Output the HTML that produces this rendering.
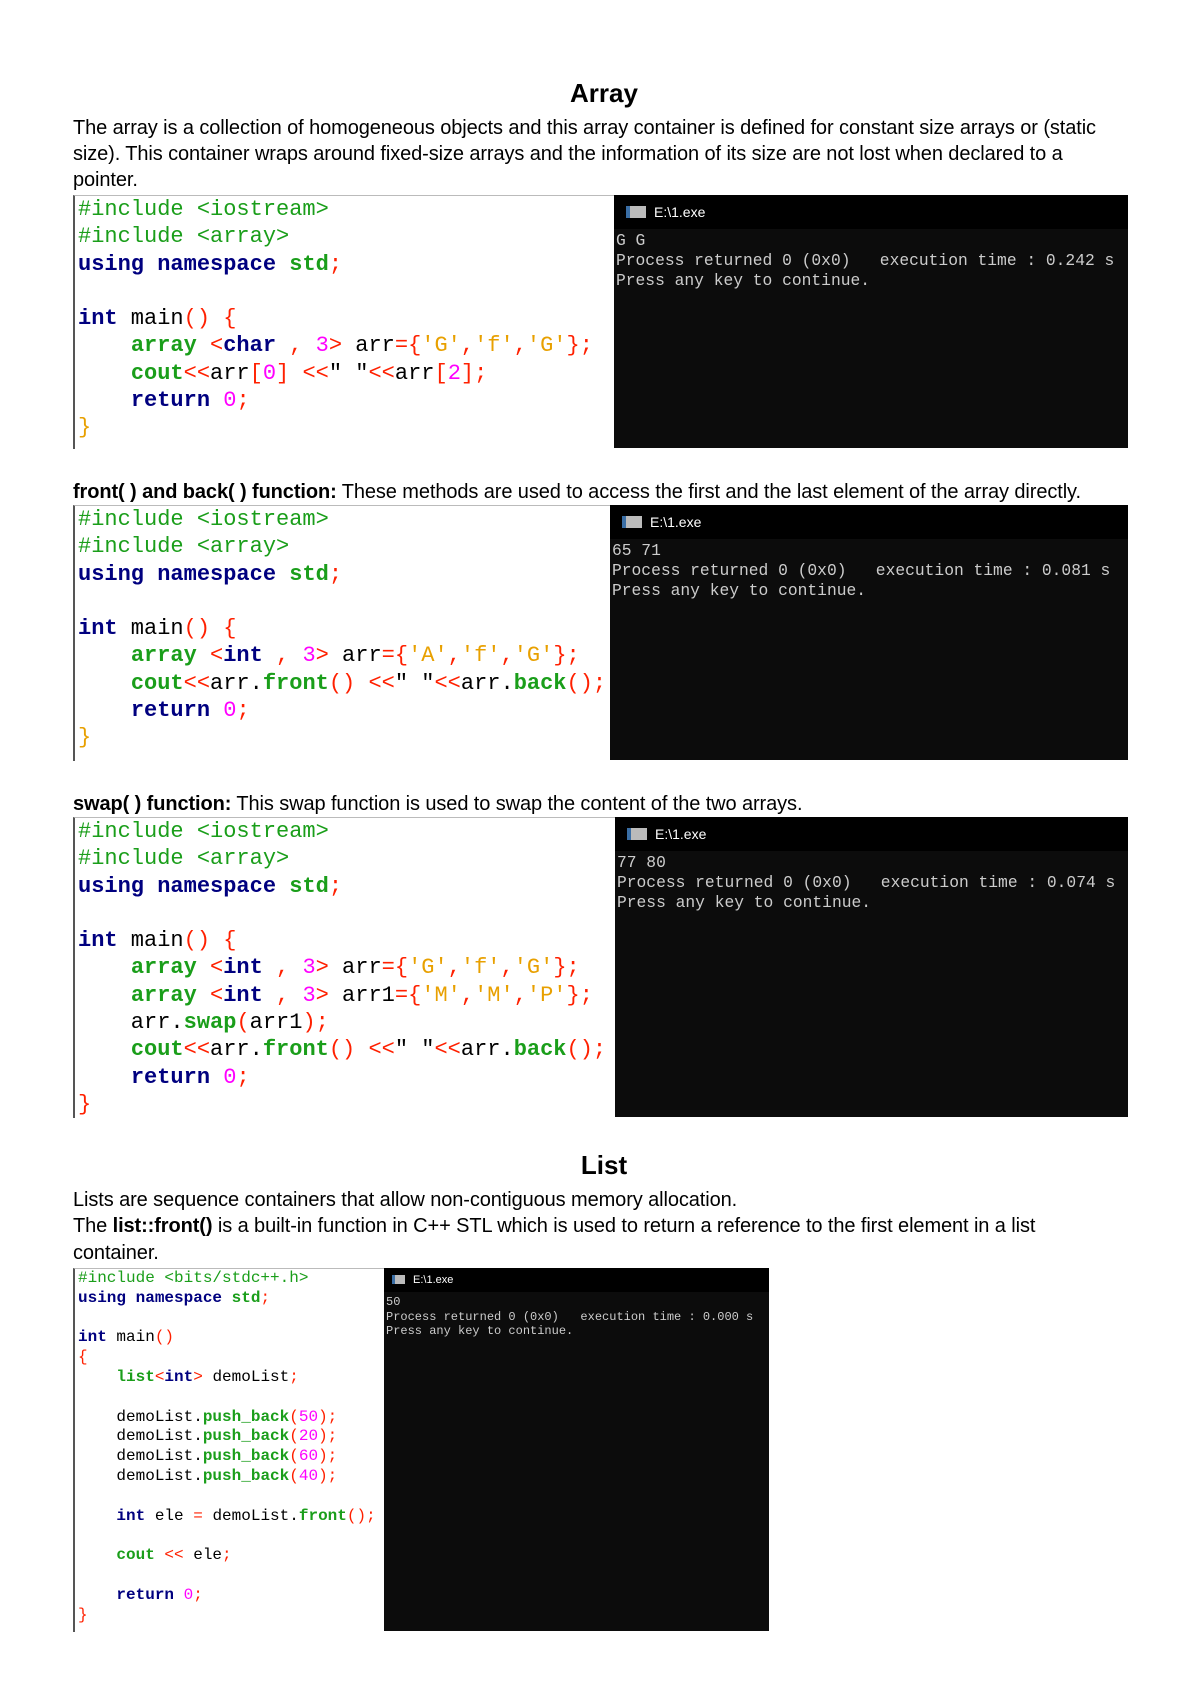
<!DOCTYPE html>
<html><head><meta charset="utf-8"><style>
body{margin:0;width:1200px;height:1698px;background:#fff;position:relative;overflow:hidden;font-family:"Liberation Sans",sans-serif;color:#000}
.t{position:absolute;white-space:nowrap;font-size:20px;line-height:26px;left:73px;letter-spacing:-0.1px}
.h{position:absolute;width:1200px;text-align:center;font-size:26px;font-weight:bold;left:4px}
.code{position:absolute;background:#fff;border-left:2px solid #555;border-top:1px solid #bbb;overflow:hidden;font-family:"Liberation Mono",monospace;white-space:pre}
.code div{height:27.3px;line-height:27.3px;font-size:22px;padding-left:3px}
.code.s div{height:19.8px;line-height:19.8px;font-size:16px}
.term{position:absolute;background:#0c0c0c;overflow:hidden;font-family:"Liberation Mono",monospace;color:#ccc;white-space:pre}
.bar{background:#000;height:34px;color:#fff;font-family:"Liberation Sans",sans-serif;font-size:14px;line-height:34px;padding-left:12px}
.bar i{display:inline-block;width:16px;height:12px;background:#bbb;border-left:4px solid #3a6ea5;margin-right:8px;vertical-align:-1px}
.term .o{font-size:16.3px;line-height:20px;padding-left:2px;padding-top:2px}
.pp{color:#1a9e1a}.kw{color:#00007f;font-weight:bold}.g{color:#1a9e1a;font-weight:bold}.st{color:#e8a000}.n{color:#ff00ff}.r{color:#ff2000}.id{color:#222}
</style></head><body>
<div class="h" style="top:78px">Array</div>
<div class="t" style="top:115px">The array is a collection of homogeneous objects and this array container is defined for constant size arrays or (static</div>
<div class="t" style="top:141px">size). This container wraps around fixed-size arrays and the information of its size are not lost when declared to a</div>
<div class="t" style="top:167px">pointer.</div>

<div class="code" style="left:73px;top:195px;width:541px;height:253px"><div><span class="pp">#include &lt;iostream&gt;</span></div><div><span class="pp">#include &lt;array&gt;</span></div><div><span class="kw">using namespace</span> <span class="g">std</span><span class="r">;</span></div><div> </div><div><span class="kw">int</span> main<span class="r">()</span> <span class="r">{</span></div><div>    <span class="g">array</span> <span class="r">&lt;</span><span class="kw">char</span> <span class="r">,</span> <span class="n">3</span><span class="r">&gt;</span> arr<span class="r">={</span><span class="st">'G'</span><span class="r">,</span><span class="st">'f'</span><span class="r">,</span><span class="st">'G'</span><span class="r">};</span></div><div>    <span class="g">cout</span><span class="r">&lt;&lt;</span>arr<span class="r">[</span><span class="n">0</span><span class="r">]</span> <span class="r">&lt;&lt;</span>" "<span class="r">&lt;&lt;</span>arr<span class="r">[</span><span class="n">2</span><span class="r">];</span></div><div>    <span class="kw">return</span> <span class="n">0</span><span class="r">;</span></div><div><span class="st">}</span></div></div>
<div class="term" style="left:614px;top:195px;width:514px;height:253px"><div class="bar"><i></i>E:\1.exe</div><div class="o">G G
Process returned 0 (0x0)   execution time : 0.242 s
Press any key to continue.</div></div>

<div class="t" style="top:479px"><b>front( ) and back( ) function:</b> These methods are used to access the first and the last element of the array directly.</div>
<div class="code" style="left:73px;top:505px;width:537px;height:255px"><div><span class="pp">#include &lt;iostream&gt;</span></div><div><span class="pp">#include &lt;array&gt;</span></div><div><span class="kw">using namespace</span> <span class="g">std</span><span class="r">;</span></div><div> </div><div><span class="kw">int</span> main<span class="r">()</span> <span class="r">{</span></div><div>    <span class="g">array</span> <span class="r">&lt;</span><span class="kw">int</span> <span class="r">,</span> <span class="n">3</span><span class="r">&gt;</span> arr<span class="r">={</span><span class="st">'A'</span><span class="r">,</span><span class="st">'f'</span><span class="r">,</span><span class="st">'G'</span><span class="r">};</span></div><div>    <span class="g">cout</span><span class="r">&lt;&lt;</span>arr.<span class="g">front</span><span class="r">()</span> <span class="r">&lt;&lt;</span>" "<span class="r">&lt;&lt;</span>arr.<span class="g">back</span><span class="r">();</span></div><div>    <span class="kw">return</span> <span class="n">0</span><span class="r">;</span></div><div><span class="st">}</span></div></div>
<div class="term" style="left:610px;top:505px;width:518px;height:255px"><div class="bar"><i></i>E:\1.exe</div><div class="o">65 71
Process returned 0 (0x0)   execution time : 0.081 s
Press any key to continue.</div></div>

<div class="t" style="top:791px"><b>swap( ) function:</b> This swap function is used to swap the content of the two arrays.</div>
<div class="code" style="left:73px;top:817px;width:542px;height:300px"><div><span class="pp">#include &lt;iostream&gt;</span></div><div><span class="pp">#include &lt;array&gt;</span></div><div><span class="kw">using namespace</span> <span class="g">std</span><span class="r">;</span></div><div> </div><div><span class="kw">int</span> main<span class="r">()</span> <span class="r">{</span></div><div>    <span class="g">array</span> <span class="r">&lt;</span><span class="kw">int</span> <span class="r">,</span> <span class="n">3</span><span class="r">&gt;</span> arr<span class="r">={</span><span class="st">'G'</span><span class="r">,</span><span class="st">'f'</span><span class="r">,</span><span class="st">'G'</span><span class="r">};</span></div><div>    <span class="g">array</span> <span class="r">&lt;</span><span class="kw">int</span> <span class="r">,</span> <span class="n">3</span><span class="r">&gt;</span> arr1<span class="r">={</span><span class="st">'M'</span><span class="r">,</span><span class="st">'M'</span><span class="r">,</span><span class="st">'P'</span><span class="r">};</span></div><div>    arr.<span class="g">swap</span><span class="r">(</span>arr1<span class="r">);</span></div><div>    <span class="g">cout</span><span class="r">&lt;&lt;</span>arr.<span class="g">front</span><span class="r">()</span> <span class="r">&lt;&lt;</span>" "<span class="r">&lt;&lt;</span>arr.<span class="g">back</span><span class="r">();</span></div><div>    <span class="kw">return</span> <span class="n">0</span><span class="r">;</span></div><div><span class="r">}</span></div></div>
<div class="term" style="left:615px;top:817px;width:513px;height:300px"><div class="bar"><i></i>E:\1.exe</div><div class="o">77 80
Process returned 0 (0x0)   execution time : 0.074 s
Press any key to continue.</div></div>

<div class="h" style="top:1150px">List</div>
<div class="t" style="top:1187px">Lists are sequence containers that allow non-contiguous memory allocation.</div>
<div class="t" style="top:1213px">The <b>list::front()</b> is a built-in function in C++ STL which is used to return a reference to the first element in a list</div>
<div class="t" style="top:1240px">container.</div>
<div class="code s" style="left:73px;top:1268px;width:311px;height:363px"><div><span class="pp">#include &lt;bits/stdc++.h&gt;</span></div><div><span class="kw">using namespace</span> <span class="g">std</span><span class="r">;</span></div><div> </div><div><span class="kw">int</span> main<span class="r">()</span></div><div><span class="r">{</span></div><div>    <span class="g">list</span><span class="r">&lt;</span><span class="kw">int</span><span class="r">&gt;</span> demoList<span class="r">;</span></div><div> </div><div>    demoList.<span class="g">push_back</span><span class="r">(</span><span class="n">50</span><span class="r">);</span></div><div>    demoList.<span class="g">push_back</span><span class="r">(</span><span class="n">20</span><span class="r">);</span></div><div>    demoList.<span class="g">push_back</span><span class="r">(</span><span class="n">60</span><span class="r">);</span></div><div>    demoList.<span class="g">push_back</span><span class="r">(</span><span class="n">40</span><span class="r">);</span></div><div> </div><div>    <span class="kw">int</span> ele <span class="r">=</span> demoList.<span class="g">front</span><span class="r">();</span></div><div> </div><div>    <span class="g">cout</span> <span class="r">&lt;&lt;</span> ele<span class="r">;</span></div><div> </div><div>    <span class="kw">return</span> <span class="n">0</span><span class="r">;</span></div><div><span class="r">}</span></div></div>
<div class="term" style="left:384px;top:1268px;width:385px;height:363px"><div class="bar" style="height:24px;line-height:24px;font-size:11px;padding-left:8px"><i style="width:10px;height:9px;border-left-width:3px"></i>E:\1.exe</div><div class="o" style="font-size:12px;line-height:14.5px;padding-top:3px">50
Process returned 0 (0x0)   execution time : 0.000 s
Press any key to continue.</div></div>
</body></html>
